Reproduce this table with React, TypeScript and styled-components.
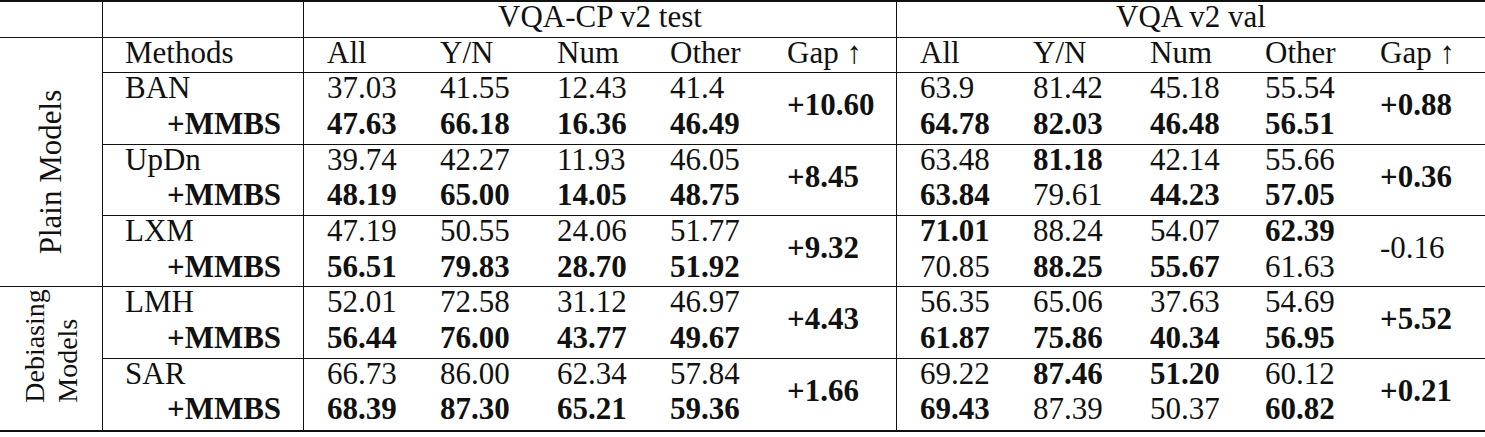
import React from "react";
import styled, { createGlobalStyle } from "styled-components";

const GlobalStyle = createGlobalStyle`
  html, body {
    margin: 0;
    padding: 0;
    background: #fff;
  }
  body {
    font-family: "Liberation Serif", "Times New Roman", serif;
    color: #111;
  }
`;

// column tracks: side label | method | 5 cols VQA-CP | 5 cols VQA v2
const COLS = "103px 201px 113px 117px 113px 117px 133px 113px 117px 115px 115px 128px";

const Table = styled.div`
  display: grid;
  grid-template-columns: ${COLS};
  grid-auto-rows: 35.67px;
  width: 1485px;
  border-top: 2px solid #111;
  border-bottom: 2px solid #111;
  font-size: 31px;
  line-height: 30px;
`;

const Cell = styled.div<{ $bold?: boolean; $rule?: boolean; $vr?: boolean; $indent?: number }>`
  box-sizing: border-box;
  padding-left: ${(p) => p.$indent ?? 23}px;
  font-weight: ${(p) => (p.$bold ? 700 : 400)};
  border-bottom: ${(p) => (p.$rule ? "1px solid #111" : "none")};
  border-right: ${(p) => (p.$vr ? "1px solid #111" : "none")};
  white-space: nowrap;
`;

const GroupHead = styled(Cell)`
  grid-column: span 5;
  padding-left: 0;
  text-align: center;
`;

const GapCell = styled(Cell)`
  grid-row: span 2;
  display: flex;
  align-items: center;
  padding-bottom: 6px;
`;

const SideCell = styled.div<{ $rows: number; $rule?: boolean }>`
  grid-row: span ${(p) => p.$rows};
  box-sizing: border-box;
  display: flex;
  align-items: center;
  justify-content: center;
  border-right: 1px solid #111;
  border-bottom: ${(p) => (p.$rule ? "1px solid #111" : "none")};
`;

const SideLabel = styled.span<{ $size: number; $lh: number; $shift: number }>`
  display: inline-block;
  flex-shrink: 0;
  white-space: nowrap;
  text-align: left;
  font-size: ${(p) => p.$size}px;
  line-height: ${(p) => p.$lh}px;
  transform: translateY(${(p) => p.$shift}px) rotate(-90deg);
`;

const groups = [
  {
    name: "BAN",
    base: ["37.03", "41.55", "12.43", "41.4", "63.9", "81.42", "45.18", "55.54"],
    ours: ["*47.63", "*66.18", "*16.36", "*46.49", "*64.78", "*82.03", "*46.48", "*56.51"],
    gaps: ["*+10.60", "*+0.88"],
  },
  {
    name: "UpDn",
    base: ["39.74", "42.27", "11.93", "46.05", "63.48", "*81.18", "42.14", "55.66"],
    ours: ["*48.19", "*65.00", "*14.05", "*48.75", "*63.84", "79.61", "*44.23", "*57.05"],
    gaps: ["*+8.45", "*+0.36"],
  },
  {
    name: "LXM",
    base: ["47.19", "50.55", "24.06", "51.77", "*71.01", "88.24", "54.07", "*62.39"],
    ours: ["*56.51", "*79.83", "*28.70", "*51.92", "70.85", "*88.25", "*55.67", "61.63"],
    gaps: ["*+9.32", "-0.16"],
  },
  {
    name: "LMH",
    base: ["52.01", "72.58", "31.12", "46.97", "56.35", "65.06", "37.63", "54.69"],
    ours: ["*56.44", "*76.00", "*43.77", "*49.67", "*61.87", "*75.86", "*40.34", "*56.95"],
    gaps: ["*+4.43", "*+5.52"],
  },
  {
    name: "SAR",
    base: ["66.73", "86.00", "62.34", "57.84", "69.22", "*87.46", "*51.20", "60.12"],
    ours: ["*68.39", "*87.30", "*65.21", "*59.36", "*69.43", "87.39", "50.37", "*60.82"],
    gaps: ["*+1.66", "*+0.21"],
  },
];

const metrics = ["All", "Y/N", "Num", "Other"];

// "*" prefix marks a bold value
const val = (s: string, key: string, rule?: boolean) => {
  const bold = s.startsWith("*");
  return (
    <Cell key={key} $bold={bold} $rule={rule}>
      {bold ? s.slice(1) : s}
    </Cell>
  );
};

const gap = (s: string, key: string, vr?: boolean, rule?: boolean) => {
  const bold = s.startsWith("*");
  return (
    <GapCell key={key} $bold={bold} $vr={vr} $rule={rule}>
      {bold ? s.slice(1) : s}
    </GapCell>
  );
};

export default function App() {
  return (
    <>
      <GlobalStyle />
      <Table>
        {/* header row */}
        <Cell $vr $rule />
        <Cell $vr $rule />
        <GroupHead $vr $rule>VQA-CP v2 test</GroupHead>
        <GroupHead $rule>VQA v2 val</GroupHead>

        {/* plain models label + metric names */}
        <SideCell $rows={7} $rule>
          <SideLabel $size={31} $lh={30} $shift={10}>
            Plain Models
          </SideLabel>
        </SideCell>
        <Cell $vr $rule $indent={22}>Methods</Cell>
        {metrics.map((m) => (
          <Cell key={"l" + m} $rule>{m}</Cell>
        ))}
        <Cell $vr $rule>Gap ↑</Cell>
        {metrics.map((m) => (
          <Cell key={"r" + m} $rule>{m}</Cell>
        ))}
        <Cell $rule>Gap ↑</Cell>

        {groups.map((g, i) => {
          const last = i === groups.length - 1;
          return (
            <React.Fragment key={g.name}>
              {i === 3 && (
                <SideCell $rows={4}>
                  <SideLabel $size={28} $lh={33} $shift={-13}>
                    Debiasing
                    <br />
                    Models
                  </SideLabel>
                </SideCell>
              )}
              <Cell $vr $indent={22}>{g.name}</Cell>
              {g.base.slice(0, 4).map((v, j) => val(v, "bl" + j))}
              {gap(g.gaps[0], "gl", true, !last)}
              {g.base.slice(4).map((v, j) => val(v, "br" + j))}
              {gap(g.gaps[1], "gr", false, !last)}

              <Cell $vr $bold $rule={!last} $indent={64}>+MMBS</Cell>
              {g.ours.map((v, j) => val(v, "o" + j, !last))}
            </React.Fragment>
          );
        })}
      </Table>
    </>
  );
}
